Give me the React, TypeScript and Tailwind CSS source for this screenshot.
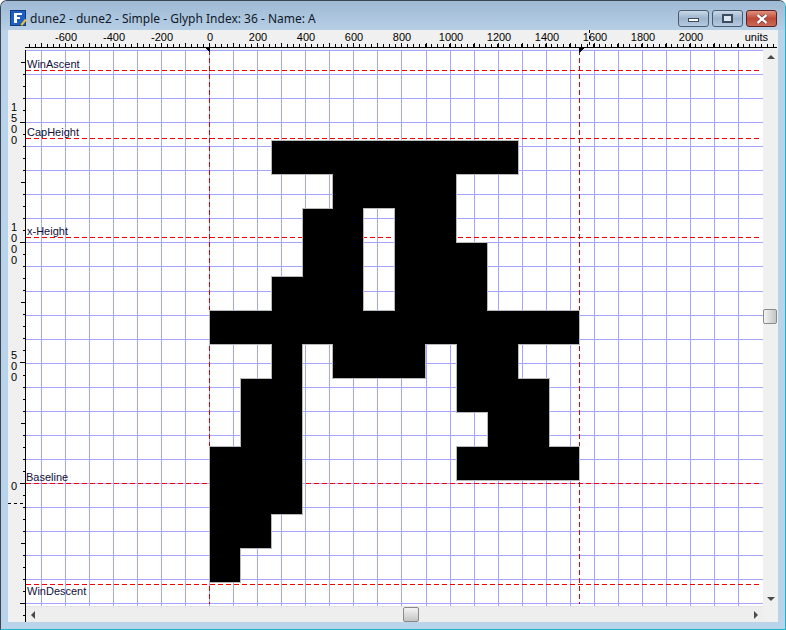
const gridX = [41, 65, 89, 113, 137, 161, 185, 209, 233, 257, 281, 305, 329, 353, 377, 401, 426, 450, 474, 498, 522, 546, 570, 594, 618, 642, 666, 690, 714, 738];
const gridY = [50, 74, 98, 122, 146, 170, 194, 218, 242, 266, 291, 315, 339, 363, 387, 411, 435, 459, 483, 507, 531, 555, 579, 603];
const metricY = [70, 138, 237, 483, 584];
const glyphPath =
  "M271.5 140.5H518.5V174.5H456.5V242.5H487.5V310.5H579.5V344.5H518.5V378.5H549.5V446.5H579.5V480.5H456.5V446.5H487.5V412.5H456.5V344.5H425.5V378.5H332.5V344.5H302.5V514.5H271.5V548.5H240.5V582.5H209.5V446.5H240.5V378.5H271.5V344.5H209.5V310.5H271.5V276.5H302.5V208.5H332.5V174.5H271.5Z M363.5 208.5H394.5V310.5H363.5Z";

const topLabels = [
  { text: "-600", x: 66 },
  { text: "-400", x: 114 },
  { text: "-200", x: 162 },
  { text: "0", x: 210 },
  { text: "200", x: 258 },
  { text: "400", x: 306 },
  { text: "600", x: 354 },
  { text: "800", x: 402 },
  { text: "1000", x: 451 },
  { text: "1200", x: 499 },
  { text: "1400", x: 547 },
  { text: "1600", x: 595 },
  { text: "1800", x: 643 },
  { text: "2000", x: 691 },
];
const sideLabels = [
  { text: "1500", y: 124 },
  { text: "1000", y: 244 },
  { text: "500", y: 366 },
  { text: "0", y: 486 },
];

function TopRuler() {
  const ticks = [];
  for (let x = 29; x < 778; x += 6) ticks.push(x);
  return (
    <div className="relative h-[20px] bg-[#f0f0f0] col-span-3 overflow-hidden">
      <svg className="absolute inset-0" width={770} height={20} viewBox="8 30 770 20" shapeRendering="crispEdges">
        <rect x={25} y={47} width={752} height={1} fill="#000" />
        {ticks.map((x) => (
          <rect key={x} x={x} y={44} width={1} height={3} fill="#000" />
        ))}
        {gridX.map((x) => (
          <rect key={x} x={x} y={43} width={1} height={4} fill="#000" />
        ))}
        <line x1={589.5} y1={30} x2={589.5} y2={47} stroke="#000" strokeDasharray="3 3" />
        <path d="M205 47H210V50H207Z" fill="#000" />
        <path d="M579 47H585L582 50H579Z" fill="#000" />
      </svg>
      {topLabels.map((l) => (
        <span
          key={l.text}
          className="absolute top-[1px] -translate-x-1/2 text-[11px] leading-[13px] text-black"
          style={{ left: l.x - 8 }}
        >
          {l.text}
        </span>
      ))}
      <span className="absolute right-[10px] top-[1px] text-[11px] leading-[13px] text-black">units</span>
    </div>
  );
}

function SideRuler() {
  const ticks = [];
  for (let y = 62; y < 622; y += 12.02) ticks.push(Math.round(y));
  return (
    <div className="relative w-[18px] bg-[#f0f0f0] row-span-2 overflow-hidden">
      <svg className="absolute inset-0" width={18} height={572} viewBox="8 50 18 572" shapeRendering="crispEdges">
        <rect x={25} y={50} width={1} height={572} fill="#000" />
        {ticks.map((y, i) => {
          const long = (i + 5) % 10 === 0;
          const mid = i % 10 === 0;
          return <rect key={y} x={long ? 20 : mid ? 21 : 23} y={y} width={long ? 5 : mid ? 4 : 2} height={1} fill="#000" />;
        })}
        <line x1={8} y1={503.5} x2={25} y2={503.5} stroke="#000" strokeDasharray="3 3" />
      </svg>
      {sideLabels.map((l) => (
        <div
          key={l.text}
          className="absolute left-[2px] w-[8px] -translate-y-1/2 flex flex-col items-center text-[11px] leading-[11px] text-black"
          style={{ top: l.y - 50 }}
        >
          {l.text.split("").map((c, i) => (
            <span key={i}>{c}</span>
          ))}
        </div>
      ))}
    </div>
  );
}

function GlyphCanvas() {
  return (
    <div className="relative bg-white overflow-hidden">
      <svg className="absolute inset-0" width={737} height={556} viewBox="26 50 737 556" shapeRendering="crispEdges">
        {gridX.map((x) => (
          <rect key={x} x={x} y={50} width={1} height={556} fill="#a5a5ff" />
        ))}
        {gridY.map((y) => (
          <rect key={y} x={26} y={y} width={737} height={1} fill="#a5a5ff" />
        ))}
        {metricY.map((y) => (
          <line key={y} x1={26} y1={y + 0.5} x2={762} y2={y + 0.5} stroke="#f00000" strokeDasharray="5 3" />
        ))}
        <line x1={209.5} y1={50} x2={209.5} y2={604} stroke="#e00000" strokeDasharray="5 3" />
        <line x1={579.5} y1={50} x2={579.5} y2={604} stroke="#e00000" strokeDasharray="5 3" />
        <path d={glyphPath} fill="#000" stroke="#b8b8b8" fillRule="evenodd" />
        <path d="M207 50H210V53Z" fill="#000" />
        <path d="M579 50H582L579 53Z" fill="#000" />
      </svg>
      <span className="absolute left-[1px] top-[8px] text-[11px] leading-[13px] text-[#10103a]">WinAscent</span>
      <span className="absolute left-[1px] top-[76px] text-[11px] leading-[13px] text-[#10103a]">CapHeight</span>
      <span className="absolute left-[1px] top-[175px] text-[11px] leading-[13px] text-[#10103a]">x-Height</span>
      <span className="absolute left-[0px] top-[421px] text-[11px] leading-[13px] text-[#10103a]">Baseline</span>
      <span className="absolute left-[1px] top-[535px] text-[11px] leading-[13px] text-[#10103a]">WinDescent</span>
    </div>
  );
}

function VScroll() {
  return (
    <div className="flex flex-col items-center bg-[#f0f0f0] py-[5px]">
      <svg width={8} height={5} viewBox="0 0 8 5"><path d="M4 0L8 4H0Z" fill="#4a4a4a" /></svg>
      <div className="mt-[249px] h-[15px] w-[14px] self-start rounded-[2px] border border-[#8a8a8a] bg-gradient-to-r from-[#f4f4f4] to-[#c4c4c4]" />
      <svg className="mt-auto" width={8} height={5} viewBox="0 0 8 5"><path d="M4 5L8 1H0Z" fill="#4a4a4a" /></svg>
    </div>
  );
}

function HScroll() {
  return (
    <div className="flex items-center bg-[#eeeeee] border-t border-[#e4e4e4] px-[5px]">
      <svg width={5} height={8} viewBox="0 0 5 8"><path d="M0 4L4 0V8Z" fill="#4a4a4a" /></svg>
      <div className="ml-[367px] h-[15px] w-[16px] rounded-[2px] border border-[#8a8a8a] bg-gradient-to-b from-[#f4f4f4] to-[#c4c4c4]" />
      <svg className="ml-auto" width={5} height={8} viewBox="0 0 5 8"><path d="M5 4L1 0V8Z" fill="#4a4a4a" /></svg>
    </div>
  );
}

function AppIcon() {
  return (
    <svg width={17} height={17} viewBox="0 0 17 17" className="shrink-0" shapeRendering="crispEdges">
      <rect x={0.5} y={0.5} width={15} height={15} rx={1} fill="#1f5fc4" stroke="#123a80" />
      <rect x={4} y={3} width={8} height={2} fill="#fff" />
      <rect x={4} y={3} width={3} height={10} fill="#fff" />
      <rect x={4} y={7} width={6} height={2} fill="#fff" />
      <path d="M10 15L15 9L17 10L12 16Z" fill="#e8c040" shapeRendering="auto" />
      <path d="M9 16L10 14L12 16Z" fill="#404040" shapeRendering="auto" />
    </svg>
  );
}

function TitleButtons() {
  return (
    <div className="flex items-start gap-[3px]">
      <div className="flex h-[17px] w-[31px] items-center justify-center rounded-[3px] border border-[#4c5c70] bg-gradient-to-b from-[#c8d8e8] via-[#9db4cc] to-[#b6cbe0]">
        <div className="mt-[3px] h-[4px] w-[11px] border border-[#3c4c60] bg-white" />
      </div>
      <div className="flex h-[17px] w-[31px] items-center justify-center rounded-[3px] border border-[#4c5c70] bg-gradient-to-b from-[#c8d8e8] via-[#9db4cc] to-[#b6cbe0]">
        <div className="h-[9px] w-[11px] border-2 border-[#3c4c60] bg-[#dce6f0]" />
      </div>
      <div className="flex h-[17px] w-[31px] items-center justify-center rounded-[3px] border border-[#5a2020] bg-gradient-to-b from-[#e09080] via-[#c04a38] to-[#c86a58]">
        <svg width={12} height={10} viewBox="0 0 12 10">
          <path d="M1.5 1L10.5 9M10.5 1L1.5 9" stroke="#4a2020" strokeWidth={3.4} />
          <path d="M1.5 1L10.5 9M10.5 1L1.5 9" stroke="#fff" strokeWidth={2.4} />
        </svg>
      </div>
    </div>
  );
}

export default function App() {
  return (
    <div className="flex h-[630px] w-[786px] flex-col overflow-hidden rounded-t-[7px] border border-[#3a4654] border-r-[#1fb4c8] border-b-[#1fb4c8] bg-[#b9d3ea] font-['Liberation_Sans',sans-serif]">
      <div className="flex h-[29px] items-start justify-between bg-gradient-to-b from-[#9fb9d4] to-[#b6cfe6] pl-[9px] pr-[8px] pt-[9px]">
        <div className="flex items-center gap-[3px]">
          <AppIcon />
          <span className="font-['Noto_Sans',sans-serif] text-[12px] leading-[17px] text-[#101828]">
            dune2 - dune2 - Simple - Glyph Index: 36 - Name: A
          </span>
        </div>
        <TitleButtons />
      </div>
      <div className="mx-[7px] mb-[6px] grid h-[592px] grid-cols-[18px_737px_15px] grid-rows-[20px_556px_16px]">
        <TopRuler />
        <SideRuler />
        <GlyphCanvas />
        <VScroll />
        <HScroll />
        <div className="bg-[#f0f0f0]" />
      </div>
    </div>
  );
}
